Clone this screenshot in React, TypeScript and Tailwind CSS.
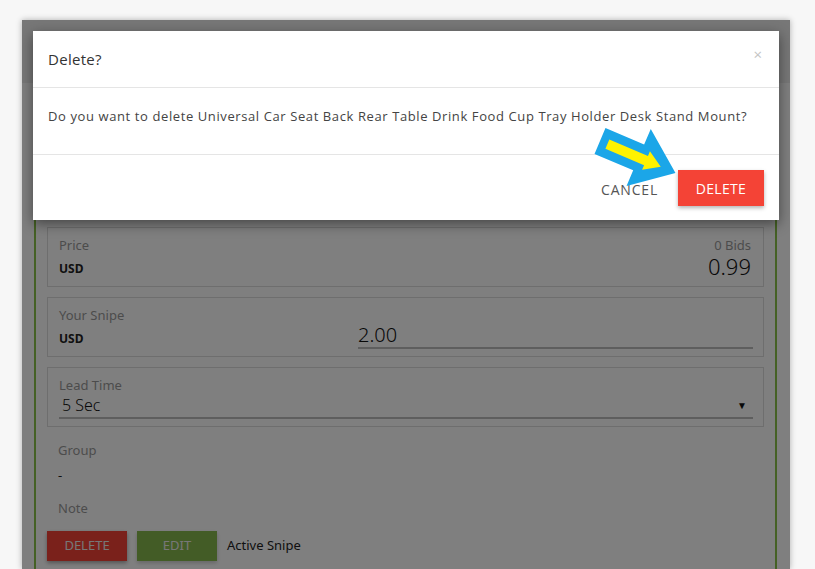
import React from "react";

const bodyFont = { fontFamily: '"Noto Sans", "Open Sans", sans-serif' };
const modalFont = { fontFamily: '"Open Sans", "Noto Sans", sans-serif' };

function Arrow() {
  return (
    <svg
      className="absolute left-[566px] top-[95px] z-30"
      width="100"
      height="80"
      viewBox="0 0 100 80"
    >
      <g transform="translate(12,26) rotate(23)">
        <polygon
          points="0,-14 42,-14 42,-31 82,0 42,31 42,14 0,14"
          fill="#1ba6e8"
        />
        <polygon
          points="8,-5 50,-5 50,-10 66,0 50,10 50,5 8,5"
          fill="#fff200"
        />
      </g>
    </svg>
  );
}

function Field({ children }: { children: React.ReactNode }) {
  return (
    <div className="h-[60px] border border-[#dcdcdc] pl-[11px] pr-[10px] pt-[8px]">
      {children}
    </div>
  );
}

export default function App() {
  return (
    <div className="h-[569px] overflow-hidden bg-[#f7f7f7] pl-[22px] pt-[20px]" style={bodyFont}>
      <div className="relative h-[549px] w-[768px] overflow-hidden bg-white shadow-[0_0_6px_rgba(0,0,0,0.3)]">
        {/* page behind the dialog */}
        <div className="h-[63px] bg-[#eeeeee]" />
        <div className="ml-[12px] mt-[12px] w-[743px] border-x-2 border-t-2 border-[#8bc34a] px-[11px] pb-4 pt-[130px] text-[13px] text-[#999]">
          <div className="flex flex-col gap-[10px]">
            <Field>
              <div className="flex justify-between">
                <div className="flex flex-col">
                  <span className="leading-[18px]">Price</span>
                  <span className="mt-[6px] text-[12px] font-bold text-[#222]">USD</span>
                </div>
                <div className="flex flex-col items-end pr-[2px]">
                  <span className="leading-[18px]">0 Bids</span>
                  <span className="mt-[1px] text-[22px] font-light leading-[23px] text-[#111]">0.99</span>
                </div>
              </div>
            </Field>
            <Field>
              <div className="flex">
                <div className="flex w-[299px] flex-col">
                  <span className="leading-[18px]">Your Snipe</span>
                  <span className="mt-[6px] text-[12px] font-bold text-[#222]">USD</span>
                </div>
                <div className="mt-[16px] flex-1">
                  <div className="border-b-2 border-[#bdbdbd] text-[20px] font-light leading-[25px] text-[#111]">2.00</div>
                </div>
              </div>
            </Field>
            <Field>
              <span className="block leading-[18px]">Lead Time</span>
              <div className="flex items-center justify-between border-b-2 border-[#bdbdbd] pb-[1px] pl-[3px] pr-[6px] text-[16px] text-[#111]">
                <span className="font-light leading-[22px]">5 Sec</span>
                <span className="text-[10px]">▼</span>
              </div>
            </Field>
          </div>
          <div className="px-[11px] pt-[14px]">
            <div className="leading-[18px]">Group</div>
            <div className="mt-[7px] leading-[18px] text-[#222]">-</div>
            <div className="mt-[15px] leading-[18px]">Note</div>
          </div>
          <div className="mt-[14px] flex items-center gap-[10px]">
            <button className="h-[30px] w-[80px] bg-[#f44336] text-[13px] text-[#eee] shadow-[0_2px_4px_rgba(0,0,0,0.35)]">DELETE</button>
            <button className="h-[30px] w-[80px] bg-[#86b84c] text-[13px] text-[#eee] shadow-[0_2px_4px_rgba(0,0,0,0.2)]">EDIT</button>
            <span className="text-[13px] text-[#222]">Active Snipe</span>
          </div>
        </div>

        {/* overlay */}
        <div className="absolute inset-0 z-10 bg-black/50" />

        {/* dialog */}
        <div
          className="absolute left-[11px] top-[11px] z-20 w-[746px] bg-white shadow-[0_4px_12px_rgba(0,0,0,0.45)]"
          style={modalFont}
        >
          <div className="relative flex h-[57px] items-center border-b border-[#e5e5e5] px-[15px] pt-[1px]">
            <span className="text-[15px] tracking-[0.3px] text-[#333]">Delete?</span>
            <span className="absolute right-[17px] top-[12px] text-[15px] text-[#c4c4c4]">×</span>
          </div>
          <div className="h-[67px] border-b border-[#e5e5e5] px-[15px] pt-[19px] text-[13px] tracking-[0.6px] text-[#444]">
            Do you want to delete Universal Car Seat Back Rear Table Drink Food Cup Tray Holder Desk Stand Mount?
          </div>
          <div className="flex h-[65px] items-start justify-end gap-[20px] pr-[15px] pt-[15px]">
            <button className="mt-[9px] text-[14px] tracking-[0.8px] text-[#555]">CANCEL</button>
            <button className="h-[36px] w-[86px] bg-[#f44336] text-[14px] tracking-[0.3px] text-white shadow-[0_2px_4px_rgba(0,0,0,0.3)]">DELETE</button>
          </div>
        </div>

        <Arrow />
      </div>
    </div>
  );
}
